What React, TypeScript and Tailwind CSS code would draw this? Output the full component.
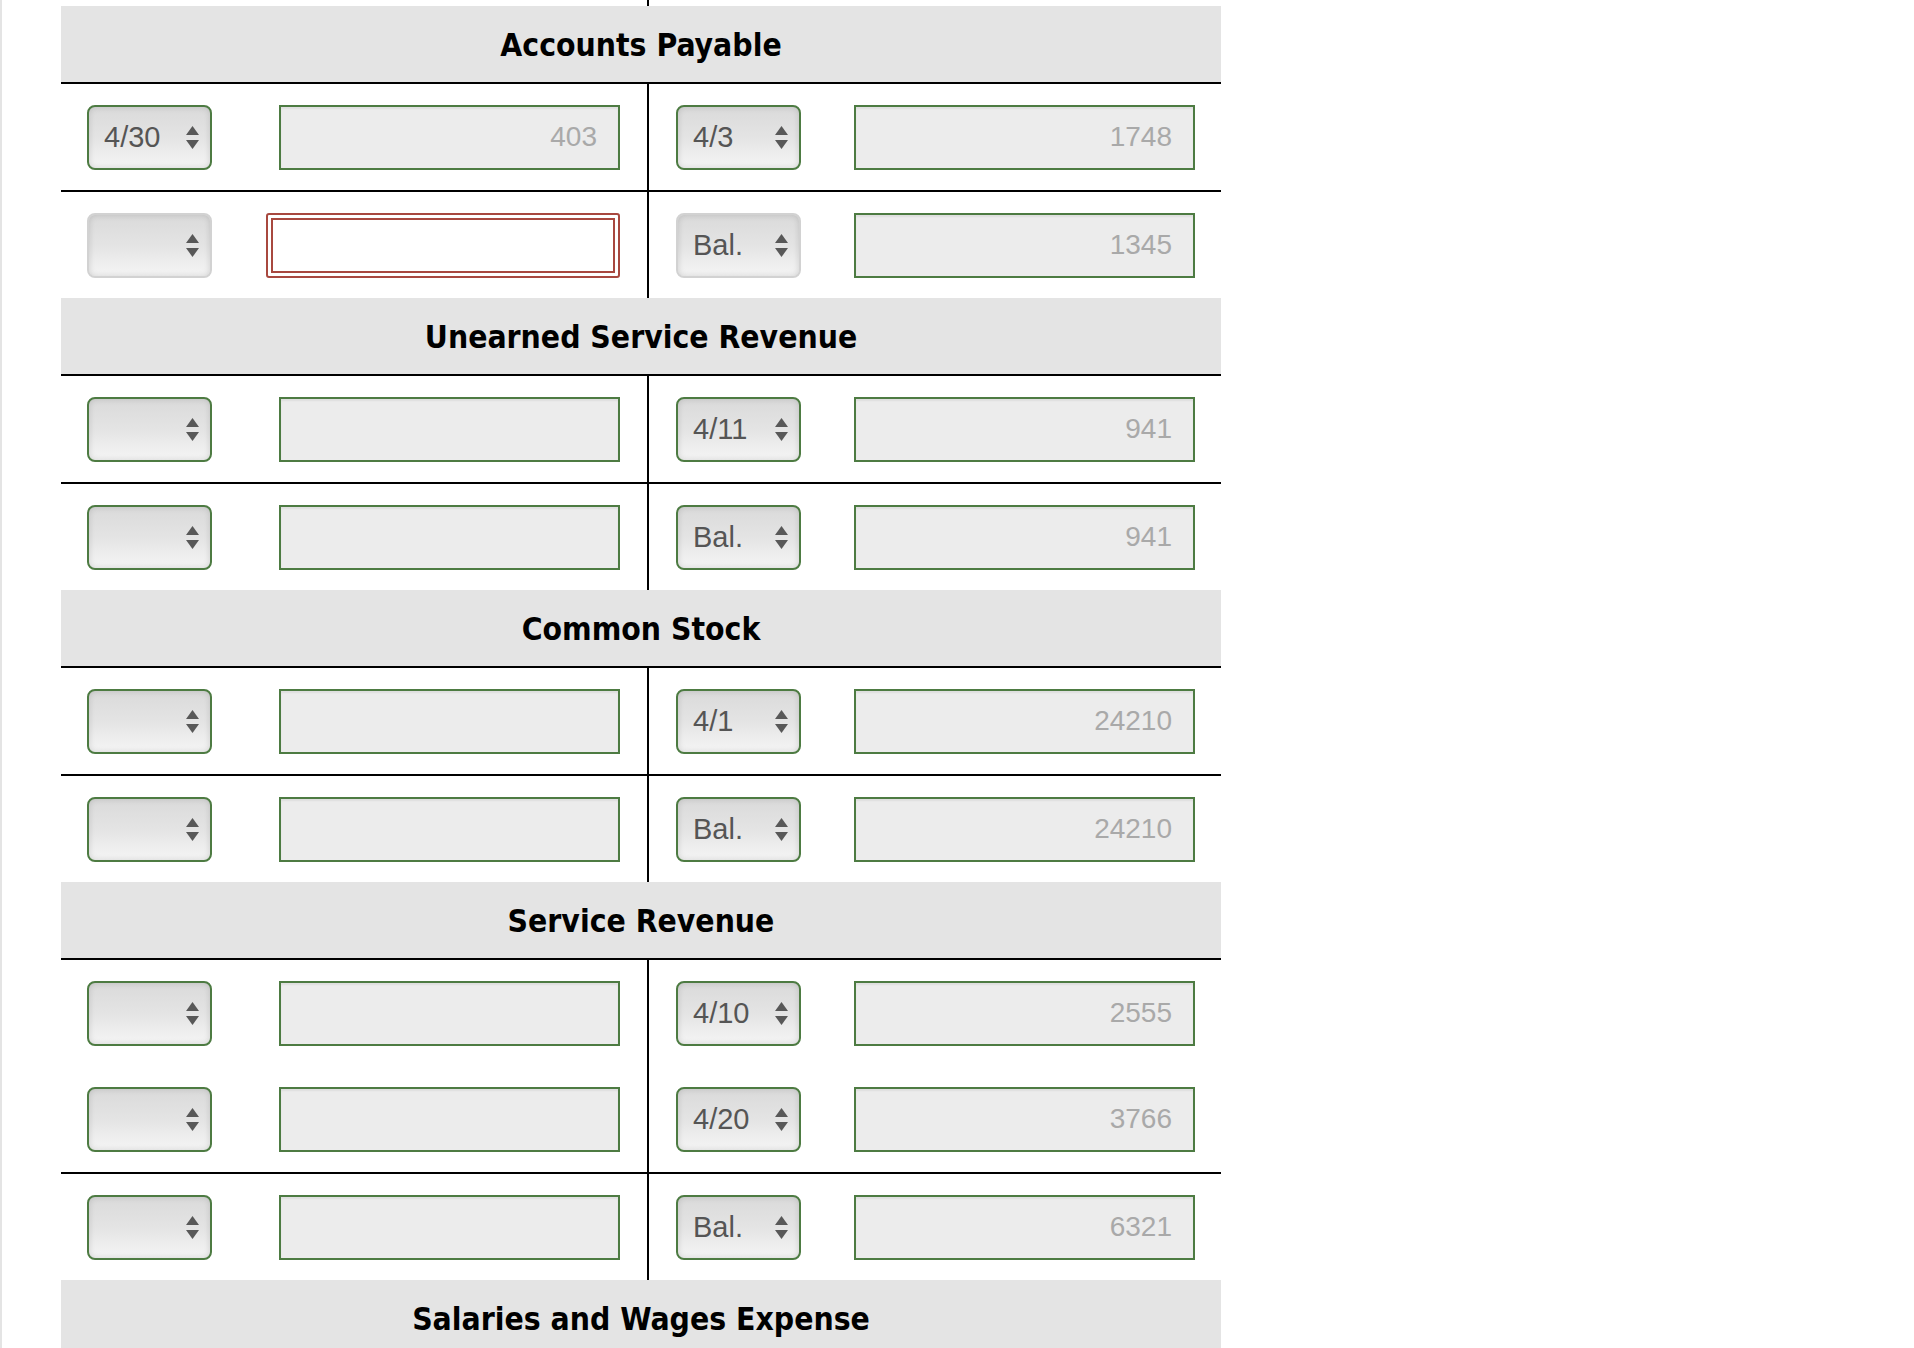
import React from "react";

type Side = { date: string; amount?: string; error?: boolean };
type Row = { left: Side; right: Side; line: boolean; plain?: boolean };
type Section = { title: string; rows: Row[] };

const SECTIONS: Section[] = [
  {
    title: "Accounts Payable",
    rows: [
      { left: { date: "4/30", amount: "403" }, right: { date: "4/3", amount: "1748" }, line: true },
      { left: { date: "", error: true }, right: { date: "Bal.", amount: "1345" }, line: false, plain: true },
    ],
  },
  {
    title: "Unearned Service Revenue",
    rows: [
      { left: { date: "", amount: "" }, right: { date: "4/11", amount: "941" }, line: true },
      { left: { date: "", amount: "" }, right: { date: "Bal.", amount: "941" }, line: false },
    ],
  },
  {
    title: "Common Stock",
    rows: [
      { left: { date: "", amount: "" }, right: { date: "4/1", amount: "24210" }, line: true },
      { left: { date: "", amount: "" }, right: { date: "Bal.", amount: "24210" }, line: false },
    ],
  },
  {
    title: "Service Revenue",
    rows: [
      { left: { date: "", amount: "" }, right: { date: "4/10", amount: "2555" }, line: false },
      { left: { date: "", amount: "" }, right: { date: "4/20", amount: "3766" }, line: true },
      { left: { date: "", amount: "" }, right: { date: "Bal.", amount: "6321" }, line: false },
    ],
  },
  {
    title: "Salaries and Wages Expense",
    rows: [],
  },
];

// up / down select arrows
const Arrows = () => (
  <svg width="13" height="23" viewBox="0 0 13 23" className="shrink-0">
    <polygon points="0,9 6.5,0 13,9" fill="#585858" />
    <polygon points="0,14 13,14 6.5,23" fill="#585858" />
  </svg>
);

const DateSelect = ({ value, plain }: { value: string; plain?: boolean }) => (
  <div
    className={
      "flex h-[65px] w-[125px] shrink-0 items-center justify-between rounded-[8px] border-2 bg-linear-to-b from-[#dadada] via-[#e4e4e4] to-[#f5f5f5] pl-[15px] pr-[11px] text-[29px] text-[#555] shadow-[inset_0_0_6px_rgba(0,0,0,0.14)] font-['Liberation_Sans',Arial,sans-serif] " +
      (plain ? "border-[#d2d2d2]" : "border-[#4d7b42]")
    }
  >
    <span className="leading-none">{value}</span>
    <Arrows />
  </div>
);

const Amount = ({ side }: { side: Side }) => {
  if (side.error) {
    return (
      <div className="h-[65px] w-[354px] shrink-0 rounded-[3px] border-2 border-[#a8483f] bg-white p-[3px]">
        <div className="h-full w-full border-2 border-[#a8483f] bg-white" />
      </div>
    );
  }
  return (
    <input
      readOnly
      value={side.amount ?? ""}
      className="h-[65px] w-[341px] shrink-0 border-2 border-[#4d7b42] bg-[#ececec] pr-[21px] text-right text-[28px] text-[#a9a9a9] shadow-[inset_0_2px_2px_rgba(0,0,0,0.06)] outline-none font-['Liberation_Sans',Arial,sans-serif]"
    />
  );
};

const TRow = ({ row }: { row: Row }) => (
  <div className={row.line ? "flex h-[108px] border-b-2 border-black" : "flex h-[106px]"}>
    <div className="flex w-[588px] shrink-0 items-center justify-between border-r-2 border-black pl-[26px] pr-[27px]">
      <DateSelect value={row.left.date} plain={row.plain} />
      <Amount side={row.left} />
    </div>
    <div className="flex flex-1 items-center justify-between pl-[27px] pr-[26px]">
      <DateSelect value={row.right.date} plain={row.plain} />
      <Amount side={row.right} />
    </div>
  </div>
);

export default function App() {
  return (
    <div className="min-h-screen border-l-2 border-[#e4e4e4] bg-white">
      <div className="ml-[59px] w-[1160px]">
        <div className="flex h-[6px]">
          <div className="w-[588px] border-r-2 border-black" />
        </div>
        {SECTIONS.map((s) => (
          <div key={s.title}>
            <div className="flex h-[78px] items-center justify-center border-b-2 border-black bg-[#e4e4e4] pt-[3px]">
              <h2 className="text-[31.6px] font-bold text-black font-stretch-condensed font-['DejaVu_Sans_Condensed','DejaVu_Sans',sans-serif]">
                {s.title}
              </h2>
            </div>
            {s.rows.map((r, i) => (
              <TRow key={i} row={r} />
            ))}
          </div>
        ))}
      </div>
    </div>
  );
}
